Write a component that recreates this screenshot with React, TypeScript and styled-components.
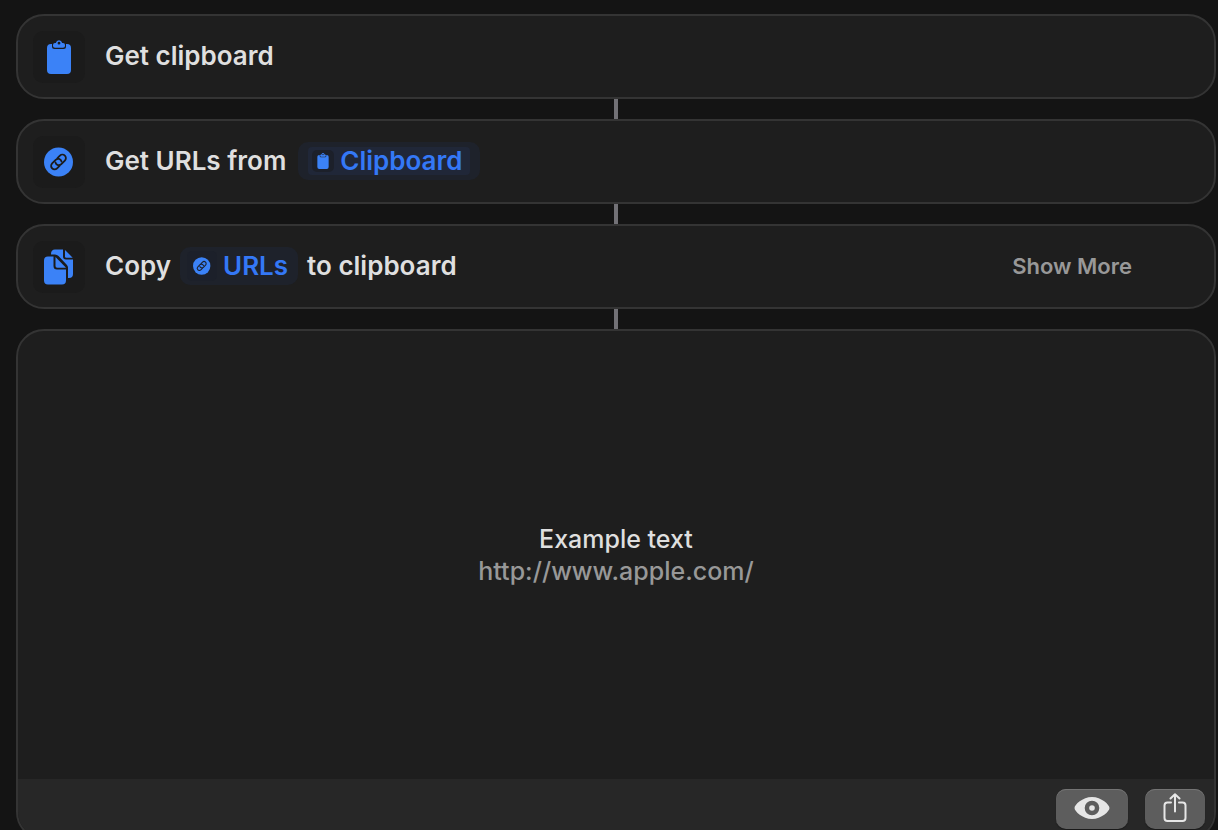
import React from "react";
import styled, { createGlobalStyle } from "styled-components";

const GlobalStyle = createGlobalStyle`
  * { box-sizing: border-box; }
  html { height: 100%; background: #141414; }
  body {
    margin: 0;
    height: 100%;
    overflow: hidden;
    background: #141414;
    color: #dfdfdf;
    font-family: Inter, "Liberation Sans", sans-serif;
    font-size: 26px;
    line-height: 32px;
  }
  #root { height: 100%; }
`;

const Workflow = styled.main`
  display: flex;
  flex-direction: column;
  height: 100%;
  padding: 14px 2px 0 16px;
`;

const ActionCard = styled.section`
  flex: none;
  display: flex;
  align-items: center;
  min-height: 85px;
  padding: 0 82px 0 15px;
  border: 2px solid #343434;
  border-radius: 28px;
  background: #1e1e1e;
`;

const Connector = styled.div`
  flex: none;
  align-self: center;
  width: 4px;
  height: 20px;
  background: #727176;
`;

const IconTile = styled.span`
  flex: none;
  display: flex;
  align-items: center;
  justify-content: center;
  width: 52px;
  height: 52px;
  margin-right: 20px;
  border-radius: 10px;
  background: #1b1b1b;
  color: #3b82f7;
`;

const Sentence = styled.p<{ $gap?: number }>`
  flex: 1;
  display: flex;
  align-items: center;
  gap: ${(p) => p.$gap ?? 9}px;
  margin: 0;
  padding-bottom: 2px;
  font-weight: 600;
  white-space: nowrap;
`;

const Token = styled.button<{ $inset: number }>`
  display: flex;
  align-items: center;
  height: 38px;
  padding: 0 ${(p) => p.$inset}px;
  border: 0;
  border-radius: 10px;
  background: #1e222b;
  color: #3478f6;
  font: inherit;
`;

const TokenBody = styled.span<{ $raised?: boolean }>`
  display: flex;
  align-items: center;
  gap: 6px;
  height: 28px;
  padding: 0 7px 0 4px;
  border-radius: 4px;
  background: ${(p) => (p.$raised ? "#202738" : "transparent")};
`;

const TokenIcon = styled.span<{ $size: number }>`
  display: flex;
  align-items: center;
  justify-content: center;
  width: ${(p) => p.$size}px;
  height: ${(p) => p.$size}px;
  border-radius: 5px;
  background: #1c202a;
  color: #3b82f7;
`;

const ShowMore = styled.button`
  padding: 0 0 2px;
  border: 0;
  background: none;
  color: #989898;
  font: inherit;
  font-size: 22px;
  font-weight: 600;
`;

const ResultCard = styled.section`
  flex: 1 0 auto;
  display: flex;
  flex-direction: column;
  margin-bottom: -10px;
  border: 2px solid #343434;
  border-radius: 28px;
  background: #1e1e1e;
  overflow: hidden;
`;

const Preview = styled.div`
  flex: 1;
  display: flex;
  flex-direction: column;
  align-items: center;
  justify-content: center;
  font-size: 25px;
  font-weight: 500;
`;

const PreviewTitle = styled.p`
  margin: 0;
`;

const PreviewLink = styled.a`
  color: #989898;
  text-decoration: none;
`;

const Toolbar = styled.footer`
  display: flex;
  justify-content: flex-end;
  gap: 17px;
  height: 59px;
  padding: 10px 9px 0;
  background: #272727;
`;

const ToolButton = styled.button<{ $width: number }>`
  display: flex;
  align-items: center;
  justify-content: center;
  width: ${(p) => p.$width}px;
  height: 40px;
  padding: 0 0 2px;
  border: 0;
  border-radius: 10px;
  background: #5d5d5d;
  box-shadow: inset 0 1px 0 #747474, 0 1px 1px #1a1a1a;
  color: #e6e6e6;
`;

const ClipboardIcon = ({ width, height }: { width: number; height: number }) => (
  <svg width={width} height={height} viewBox="0 0 24 34" fill="currentColor" aria-hidden="true">
    <path d="M4 4H5V6.5Q5 9 7.500 9H16.500Q19 9 19 6.500V4H20Q24 4 24 8V30Q24 34 20 34H4Q0 34 0 30V8Q0 4 4 4Z" />
    <path fillRule="evenodd" d="M8 3H8.800Q9.500 0.200 12 0.200Q14.500 0.200 15.200 3H16Q18 3 18 5V6Q18 7.800 16 7.800H8Q6 7.800 6 6V5Q6 3 8 3ZM12 1.800A1.400 1.400 0 1 0 12 4.600A1.400 1.400 0 1 0 12 1.800Z" />
  </svg>
);

const LinkIcon = ({ size, ink }: { size: number; ink: string }) => (
  <svg width={size} height={size} viewBox="0 0 30 30" aria-hidden="true">
    <circle cx="14.500" cy="15" r="14.500" fill="currentColor" />
    <g fill="none" stroke={ink} strokeWidth="1.800" strokeLinecap="round" transform="translate(0 0.500) rotate(-45 14.500 14.500)">
      <path d="M12.500 18H9A3.500 3.500 0 0 1 9 11H14A3.500 3.500 0 0 1 17 16.300" />
      <path d="M16.500 11H20A3.500 3.500 0 0 1 20 18H15A3.500 3.500 0 0 1 12 12.700" />
    </g>
  </svg>
);

const CopyIcon = () => (
  <svg width="30" height="36" viewBox="0 0 30 36" fill="currentColor" aria-hidden="true">
    <path d="M7 5Q7 0.500 11 0.500H19V7.500Q19 10.500 22 10.500H29V25Q29 29 25 29H24V18.500Q24 17 22.500 15.500L14.500 7Q13 5.500 11 5.500H7Z" />
    <path d="M21 1V7.500Q21 8.700 22.200 8.700H28.700Z" />
    <path d="M4 7.500H9.500V17Q9.500 20.500 13 20.500H22V31.500Q22 35.500 18 35.500H4Q0 35.500 0 31.500V11.500Q0 7.500 4 7.500Z" />
    <path d="M11.500 8V17Q11.500 18.700 13.200 18.700H22Z" />
  </svg>
);

const EyeIcon = () => (
  <svg width="36" height="24" viewBox="0 0 36 24" aria-hidden="true">
    <path fill="currentColor" fillRule="evenodd" d="M18 1C27.500 1 35.500 8.800 35.500 12S27.500 23 18 23S0.500 15.200 0.500 12S8.500 1 18 1ZM18 4.700A7.300 7.300 0 1 0 18 19.300A7.300 7.300 0 1 0 18 4.700Z" />
    <circle cx="18" cy="12" r="2.800" fill="currentColor" />
  </svg>
);

const ShareIcon = () => (
  <svg width="24" height="30" viewBox="0 0 24 30" fill="none" stroke="currentColor" strokeWidth="2" strokeLinecap="round" strokeLinejoin="round" aria-hidden="true">
    <path d="M8 9.500H4.500Q1.500 9.500 1.500 12.500V25Q1.500 28 4.500 28H19.500Q22.500 28 22.500 25V12.500Q22.500 9.500 19.500 9.500H16" />
    <path d="M12 18.500V1.200M7.500 5.500L12 1.200L16.500 5.500" />
  </svg>
);

export default function App() {
  return (
    <>
      <GlobalStyle />
      <Workflow>
        <ActionCard>
          <IconTile><ClipboardIcon width={24} height={34} /></IconTile>
          <Sentence>Get clipboard</Sentence>
        </ActionCard>
        <Connector />
        <ActionCard>
          <IconTile><LinkIcon size={30} ink="#1b1b1b" /></IconTile>
          <Sentence $gap={12}>
            Get URLs from
            <Token type="button" $inset={10}>
              <TokenBody $raised>
                <TokenIcon $size={22}><ClipboardIcon width={12} height={16} /></TokenIcon>
                Clipboard
              </TokenBody>
            </Token>
          </Sentence>
        </ActionCard>
        <Connector />
        <ActionCard>
          <IconTile><CopyIcon /></IconTile>
          <Sentence>
            Copy
            <Token type="button" $inset={3}>
              <TokenBody>
                <TokenIcon $size={30}><LinkIcon size={18} ink="#1c202a" /></TokenIcon>
                URLs
              </TokenBody>
            </Token>
            to clipboard
          </Sentence>
          <ShowMore type="button">Show More</ShowMore>
        </ActionCard>
        <Connector />
        <ResultCard>
          <Preview>
            <PreviewTitle>Example text</PreviewTitle>
            <PreviewLink href="http://www.apple.com/">http://www.apple.com/</PreviewLink>
          </Preview>
          <Toolbar>
            <ToolButton type="button" $width={72} aria-label="Quick Look"><EyeIcon /></ToolButton>
            <ToolButton type="button" $width={60} aria-label="Share"><ShareIcon /></ToolButton>
          </Toolbar>
        </ResultCard>
      </Workflow>
    </>
  );
}
